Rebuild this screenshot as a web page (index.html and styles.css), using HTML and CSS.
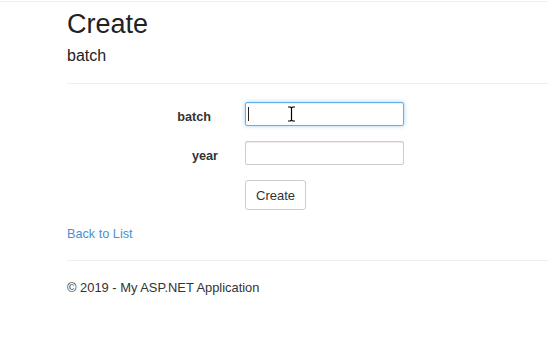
FILE: index.html
```html
<!DOCTYPE html>
<html lang="en">
<head>
    <meta charset="UTF-8">
    <meta name="viewport" content="width=device-width, initial-scale=1.0">
    <title>Create - My ASP.NET Application</title>
    <link rel="stylesheet" href="styles.css">
</head>
<body>
    <div class="navbar-edge"></div>

    <div class="container body-content">
        <h2 class="page-title">Create</h2>
        <h4 class="page-sub">batch</h4>
        <hr class="rule">

        <form class="form-horizontal">
            <label class="control-label" for="batch">batch</label>
            <div class="field">
                <input class="form-control focused" type="text" id="batch" name="batch">
                <span class="caret-line"></span>
                <svg class="ibeam" width="9" height="16" viewBox="0 0 9 16">
                    <path d="M1 1h2.5l1 1 1-1H8M4.5 2v12M1 15h2.5l1-1 1 1H8" fill="none" stroke="#000" stroke-width="1.2"/>
                </svg>
            </div>

            <label class="control-label year" for="year">year</label>
            <div class="field">
                <input class="form-control" type="text" id="year" name="year">
            </div>

            <div></div>
            <div class="field">
                <button type="button" class="btn">Create</button>
            </div>
        </form>

        <div class="back-link">
            <a href="#">Back to List</a>
        </div>

        <hr class="rule footer-rule">
        <footer class="site-footer">
            <p>&copy; 2019 - My ASP.NET Application</p>
        </footer>
    </div>
</body>
</html>
```

FILE: styles.css
```css
body {
    font-family: "Liberation Sans", Arial, sans-serif;
    font-size: 12.7px;
    color: #333;
    margin: 0;
    background-color: #fff;
}

.navbar-edge {
    height: 1px;
    border-bottom: 1px solid #f0f0f0;
}

.container {
    padding-left: 67px;
}

.page-title {
    font-size: 27px;
    font-weight: normal;
    line-height: 30px;
    margin: 7px 0 0;
    color: #222;
}

.page-sub {
    font-size: 16px;
    font-weight: normal;
    line-height: 18px;
    margin: 8px 0 0;
    color: #222;
}

.rule {
    border: 0;
    border-top: 1px solid #eee;
    margin: 18px 0 0;
    height: 0;
}

.form-horizontal {
    display: grid;
    grid-template-columns: 148px 159px;
    column-gap: 30px;
    row-gap: 15px;
    margin-top: 18px;
}

.control-label {
    font-weight: bold;
    text-align: right;
    line-height: 18px;
    padding-top: 6px;
    padding-right: 4px;
}

.control-label.year {
    padding-right: 0;
    margin-right: -3px;
}

.field {
    position: relative;
    display: flex;
    align-items: center;
}

.form-control {
    box-sizing: border-box;
    width: 159px;
    height: 24px;
    padding: 2px 8px;
    font-family: inherit;
    font-size: 12.7px;
    color: #555;
    background-color: #fff;
    border: 1px solid #ccc;
    border-radius: 2px;
    box-shadow: inset 0 1px 1px rgba(0,0,0,0.075);
    outline: none;
}

.form-control.focused {
    border-color: #66afe9;
    box-shadow: inset 0 1px 1px rgba(0,0,0,0.075), 0 0 4px rgba(102,175,233,0.6);
}

.caret-line {
    position: absolute;
    left: 3px;
    top: 5px;
    width: 1px;
    height: 14px;
    background-color: #222;
}

.ibeam {
    position: absolute;
    left: 42px;
    top: 4px;
}

.btn {
    height: 30px;
    padding: 0 10px;
    font-family: inherit;
    font-size: 13px;
    color: #333;
    background-color: #fff;
    border: 1px solid #ccc;
    border-radius: 3px;
    cursor: pointer;
}

.back-link {
    margin-top: 15px;
    line-height: 18px;
}

.back-link a {
    color: #4a8fd3;
    text-decoration: none;
}

.footer-rule {
    margin-top: 17px;
}

.site-footer p {
    margin: 18px 0 0;
    font-size: 12.9px;
    line-height: 18px;
    color: #333;
}
```
